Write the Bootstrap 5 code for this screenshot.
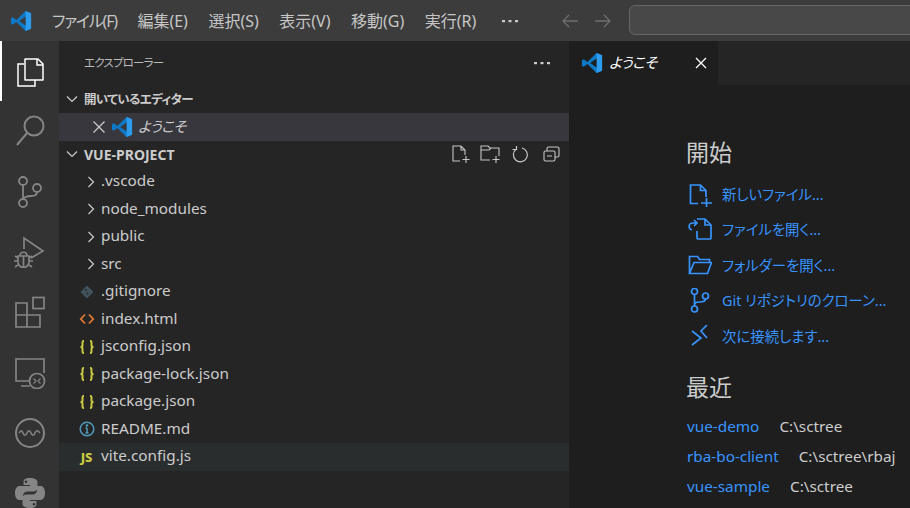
<!DOCTYPE html>
<html lang="ja">
<head>
<meta charset="utf-8">
<title>VS Code</title>
<link href="https://cdn.jsdelivr.net/npm/bootstrap@5.3.0/dist/css/bootstrap.min.css" rel="stylesheet">
<style>
html,body{height:508px;overflow:hidden;background:#1e1e1e;}
body{font-family:"Noto Sans","Noto Sans CJK JP",sans-serif;color:#ccc;font-size:15.3px;font-feature-settings:"palt";}
svg{display:block;flex:none;}
.shell{width:910px;height:508px;overflow:hidden;}
.titlebar{height:41px;background:#3c3c3c;color:#c6c6c6;flex:none;}
.tb-logo{margin:0 20px 0 10px;}
.tb-menu{gap:20.500px;font-size:16px;white-space:nowrap;}
.tb-kana{letter-spacing:-1.200px;}
.tb-dots{margin-left:26px;margin-right:43px;}
.tb-search{width:300px;height:30px;flex:none;margin:0 0 2px 17px;background:#484848;border:1px solid #666;border-radius:6px;}
.tb-nav{gap:15px;}
.activity{width:59px;background:#333;flex:none;position:relative;overflow:hidden;}
.act-item{height:60.300px;flex:none;}
.act-active{position:absolute;left:0;top:0;width:2px;height:60px;background:#fff;}
.side{width:510px;background:#252526;flex:none;}
.side-head{height:44px;padding:0 19px 0 25px;font-size:11.500px;letter-spacing:-.8px;color:#bbb;flex:none;}
.sec{height:27.500px;padding-left:5px;font-size:14px;font-weight:700;color:#ccc;flex:none;}
.sec svg.chev{margin-right:4px;}
.sec-jp{font-size:12.500px;letter-spacing:-.7px;padding-top:3px;}
.row-h{height:27.500px;flex:none;}
.open-row{background:#37373d;padding-left:33px;gap:5px;font-style:italic;height:28px;flex:none;}
.wel-name{font-size:14.500px;letter-spacing:-.7px;}
.file-row{padding-left:42.500px;padding-bottom:2px;color:#ccc;white-space:nowrap;}
.file-row.sel{background:#2a2d2e;}
.ric{width:16px;flex:none;padding-top:2px;}
.ric-dir{margin-left:-19px;margin-right:2.500px;}
.ric-file{margin-left:-23px;margin-right:6.500px;}
.js-mark{font-size:13px;font-weight:800;color:#cbcb41;line-height:16px;display:block;text-align:center;letter-spacing:-.2px;}
.acts{gap:9px;margin-left:auto;padding-right:8.500px;}
.act-last{margin-left:4.500px;}
.main{flex:1;min-width:0;background:#1e1e1e;}
.tabs{height:44px;background:#252526;flex:none;}
.tab{width:149px;background:#1e1e1e;padding:0 11px 0 12px;font-style:italic;gap:6px;color:#fff;}
.welcome{padding:51px 0 0 117px;white-space:nowrap;}
.w-h{font-size:23px;font-weight:400;line-height:32px;color:#ccc;margin:0;}
.w-link{height:35.500px;color:#3794ff;font-size:14.400px;gap:10px;}
.w-list{margin-top:16px;}
.w-start{margin-top:9px;}
.w-recents{margin-top:9px;}
.w-recent{height:30px;gap:20px;padding-left:1px;}
.w-recent a{color:#3794ff;text-decoration:none;}
.w-recent span{color:#ccc;}
</style>
</head>
<body>
<div class="shell d-flex flex-column">
  <div class="titlebar d-flex align-items-center">
    <svg class="tb-logo" width="22" height="22" viewBox="0 0 24 24"><path d="M17 1 7 11 3 8 1 9v6l2 1 4-3 10 10 6-2.500V3.500z" fill="#0e7ac7"/><path d="M17 1l6 2.500v17L17 23z" fill="#2d9cec"/><path d="M17 7l-7 5 7 5z" fill="#3c3c3c"/></svg>
    <div class="tb-menu d-flex align-items-center">
      <span class="tb-kana">ファイル(F)</span><span>編集(E)</span><span>選択(S)</span><span>表示(V)</span><span>移動(G)</span><span>実行(R)</span>
    </div>
    <svg class="tb-dots" width="16" height="4" viewBox="0 0 16 4"><g fill="#ccc"><rect x="0" y="1" width="3" height="2.200"/><rect x="6.500" y="1" width="3" height="2.200"/><rect x="13" y="1" width="3" height="2.200"/></g></svg>
    <div class="tb-nav d-flex">
      <svg width="18" height="16" viewBox="0 0 18 16" fill="none" stroke="#6e6e6e" stroke-width="1.300"><path d="M17 8H2M8 2 2 8l6 6"/></svg>
      <svg width="18" height="16" viewBox="0 0 18 16" fill="none" stroke="#6e6e6e" stroke-width="1.300"><path d="M1 8h15M10 2l6 6-6 6"/></svg>
    </div>
    <div class="tb-search"></div>
  </div>
  <div class="d-flex flex-grow-1" style="min-height:0">
    <div class="activity d-flex flex-column align-items-center">
      <div class="act-active"></div>
      <div class="act-item d-flex align-items-center justify-content-center">
        <svg width="28" height="32" viewBox="0 0 28 32" fill="none" stroke="#fff" stroke-width="1.500"><path d="M9 5v20h18V9l-5-5H9z" stroke-linejoin="round"/><path d="M21 4v6h6"/><path d="M8 9H2v22h17v-6"/></svg>
      </div>
      <div class="act-item d-flex align-items-center justify-content-center">
        <svg width="30" height="32" viewBox="0 0 30 32" fill="none" stroke="#858585" stroke-width="2"><circle cx="19" cy="11" r="9.500"/><path d="M12 18 2 30"/></svg>
      </div>
      <div class="act-item d-flex align-items-center justify-content-center">
        <svg width="26" height="32" viewBox="0 0 26 32" fill="none" stroke="#858585" stroke-width="1.800"><circle cx="6" cy="5" r="4"/><circle cx="6" cy="27" r="4"/><circle cx="20" cy="12" r="4"/><path d="M6 9v14M20 16c0 3-3 4-6 4s-8 1-8 4"/></svg>
      </div>
      <div class="act-item d-flex align-items-center justify-content-center">
        <svg width="32" height="32" viewBox="0 0 32 32" fill="none" stroke="#858585" stroke-width="1.700"><path d="M10 13V2l19 13-12 7"/><path d="M4 20h11v6a5.500 5.500 0 0 1-11 0zM6 20c0-5 7-5 7 0M1 20l3 2M18 20l-3 2M0 25h4M15 25h4M1 31l3-2M18 31l-3-2M9.500 20v11"/></svg>
      </div>
      <div class="act-item d-flex align-items-center justify-content-center">
        <svg width="32" height="32" viewBox="0 0 32 32" fill="none" stroke="#858585" stroke-width="1.700"><rect x="19" y="1.500" width="11" height="11"/><path d="M2 7h11v24H2zM2 19h24v12H13M13 19V7"/></svg>
      </div>
      <div class="act-item d-flex align-items-center justify-content-center">
        <svg width="32" height="32" viewBox="0 0 32 32" fill="none" stroke="#858585" stroke-width="1.700"><path d="M30 16V2H2v22h13M7 29h9"/><circle cx="23" cy="24" r="7.500" fill="#333"/><path d="M19.500 21.500l2.500 2.500-2.500 2.500M26.500 21.500 24 24l2.500 2.500" stroke-width="1.200"/></svg>
      </div>
      <div class="act-item d-flex align-items-center justify-content-center">
        <svg width="32" height="32" viewBox="0 0 32 32" fill="none" stroke="#858585" stroke-width="2"><circle cx="16" cy="16" r="14"/><path d="M5 16c2-3 3-3 4 0s3 3 4 0 3-3 4 0 3 3 4 0 3-3 5 0" stroke-width="1.500"/></svg>
      </div>
      <div class="act-item d-flex align-items-center justify-content-center">
        <svg width="32" height="32" viewBox="0 0 32 32" fill="#858585"><path d="M15.800 1c-6 0-6.200 2.600-6.200 4v3h6.400v1H6C3 9 1 11.500 1 16s2 7 4.500 7H9v-4c0-2.800 2.200-4.500 4.600-4.500h6.200c2.200 0 3.700-1.700 3.700-3.700V5c0-2.200-2.600-4-7.700-4zM12 3.500a1.300 1.300 0 1 1 0 2.600 1.300 1.300 0 0 1 0-2.600z"/><path d="M16.200 31c6 0 6.200-2.600 6.200-4v-3H16v-1h10c3 0 5-2.500 5-7s-2-7-4.500-7H23v4c0 2.800-2.200 4.500-4.600 4.500h-6.200c-2.200 0-3.700 1.700-3.700 3.700V27c0 2.200 2.600 4 7.700 4zM20 28.500a1.300 1.300 0 1 1 0-2.600 1.300 1.300 0 0 1 0 2.600z"/></svg>
      </div>
    </div>

    <div class="side d-flex flex-column">
      <div class="side-head d-flex align-items-center justify-content-between">
        <span>エクスプローラー</span>
        <svg width="16" height="4" viewBox="0 0 16 4"><g fill="#ccc"><rect x="0" y="1" width="3" height="2.200"/><rect x="6.500" y="1" width="3" height="2.200"/><rect x="13" y="1" width="3" height="2.200"/></g></svg>
      </div>
      <div class="sec d-flex align-items-center">
        <svg class="chev" width="16" height="16" viewBox="0 0 16 16" fill="none" stroke="#ccc" stroke-width="1.200"><path d="M3 5.500l5 5 5-5"/></svg>
        <span class="sec-jp">開いているエディター</span>
      </div>
      <div class="open-row d-flex align-items-center">
        <svg width="14" height="14" viewBox="0 0 14 14" fill="none" stroke="#ccc" stroke-width="1.200"><path d="M1.500 1.500l11 11M12.500 1.500l-11 11"/></svg>
        <svg width="22" height="22" viewBox="0 0 24 24"><path d="M17 1 7 11 3 8 1 9v6l2 1 4-3 10 10 6-2.500V3.500z" fill="#0e7ac7"/><path d="M17 1l6 2.500v17L17 23z" fill="#2d9cec"/><path d="M17 7l-7 5 7 5z" fill="#37373d"/></svg>
        <span class="wel-name">ようこそ</span>
      </div>
      <div class="sec d-flex align-items-center">
        <svg class="chev" width="16" height="16" viewBox="0 0 16 16" fill="none" stroke="#ccc" stroke-width="1.200"><path d="M3 5.500l5 5 5-5"/></svg>
        <span>VUE-PROJECT</span>
        <div class="acts d-flex align-items-center">
          <svg width="20" height="20" viewBox="0 0 20 20" fill="none" stroke="#c5c5c5" stroke-width="1.100"><path d="M9 17H2V2h8l4 4v5M10 2v4h4M15 12v7M11.500 15.500h7"/></svg>
          <svg width="22" height="20" viewBox="0 0 22 20" fill="none" stroke="#c5c5c5" stroke-width="1.100"><path d="M10 16H1V2h7l2 2h9v8M1 6h8l2-2M16 12v7M12.500 15.500h7"/></svg>
          <svg width="18" height="18" viewBox="0 0 18 18" fill="none" stroke="#c5c5c5" stroke-width="1.200"><path d="M5.500 4a7 7 0 1 0 5.500-1"/><path d="M5.500 1v3.500H1.500"/></svg>
          <svg class="act-last" width="18" height="18" viewBox="0 0 18 18" fill="none" stroke="#c5c5c5" stroke-width="1.100"><rect x="1" y="6" width="11" height="10" rx="1.500"/><path d="M4 6V3.500A1.500 1.500 0 0 1 5.500 2h9A1.500 1.500 0 0 1 16 3.500v7a1.500 1.500 0 0 1-1.500 1.500H12M4 11h5"/></svg>
        </div>
      </div>

      <div class="file-row row-h d-flex align-items-center"><div class="ric ric-dir"><svg width="16" height="16" viewBox="0 0 16 16" fill="none" stroke="#ccc" stroke-width="1.200"><path d="M5.500 3l5 5-5 5"/></svg></div><span>.vscode</span></div>
      <div class="file-row row-h d-flex align-items-center"><div class="ric ric-dir"><svg width="16" height="16" viewBox="0 0 16 16" fill="none" stroke="#ccc" stroke-width="1.200"><path d="M5.500 3l5 5-5 5"/></svg></div><span>node_modules</span></div>
      <div class="file-row row-h d-flex align-items-center"><div class="ric ric-dir"><svg width="16" height="16" viewBox="0 0 16 16" fill="none" stroke="#ccc" stroke-width="1.200"><path d="M5.500 3l5 5-5 5"/></svg></div><span>public</span></div>
      <div class="file-row row-h d-flex align-items-center"><div class="ric ric-dir"><svg width="16" height="16" viewBox="0 0 16 16" fill="none" stroke="#ccc" stroke-width="1.200"><path d="M5.500 3l5 5-5 5"/></svg></div><span>src</span></div>

      <div class="file-row row-h d-flex align-items-center"><div class="ric ric-file"><svg width="16" height="16" viewBox="0 0 16 16"><path d="M8 1.500l6.500 6.500L8 14.500 1.500 8z" fill="#41535b"/><circle cx="7" cy="6" r="1" fill="#252526"/><circle cx="8.500" cy="9.500" r="1" fill="#252526"/></svg></div><span>.gitignore</span></div>
      <div class="file-row row-h d-flex align-items-center"><div class="ric ric-file"><svg width="16" height="16" viewBox="0 0 16 16" fill="none" stroke="#e37933" stroke-width="1.800"><path d="M6 3.500 1.800 8 6 12.500M10 3.500 14.200 8 10 12.500"/></svg></div><span>index.html</span></div>
      <div class="file-row row-h d-flex align-items-center"><div class="ric ric-file"><svg width="16" height="16" viewBox="0 0 16 16" fill="none" stroke="#cbcb41" stroke-width="2"><path d="M5 2h-.5C3.500 2 3.500 3 3.500 4v2.500C3.500 7.500 2.500 8 1.500 8c1 0 2 .5 2 1.500V12c0 1 0 2 1 2H5M11 2h.5c1 0 1 1 1 2v2.500c0 1 1 1.500 2 1.500-1 0-2 .5-2 1.500V12c0 1 0 2-1 2H11"/></svg></div><span>jsconfig.json</span></div>
      <div class="file-row row-h d-flex align-items-center"><div class="ric ric-file"><svg width="16" height="16" viewBox="0 0 16 16" fill="none" stroke="#cbcb41" stroke-width="2"><path d="M5 2h-.5C3.500 2 3.500 3 3.500 4v2.500C3.500 7.500 2.500 8 1.500 8c1 0 2 .5 2 1.500V12c0 1 0 2 1 2H5M11 2h.5c1 0 1 1 1 2v2.500c0 1 1 1.500 2 1.500-1 0-2 .5-2 1.500V12c0 1 0 2-1 2H11"/></svg></div><span>package-lock.json</span></div>
      <div class="file-row row-h d-flex align-items-center"><div class="ric ric-file"><svg width="16" height="16" viewBox="0 0 16 16" fill="none" stroke="#cbcb41" stroke-width="2"><path d="M5 2h-.5C3.500 2 3.500 3 3.500 4v2.500C3.500 7.500 2.500 8 1.500 8c1 0 2 .5 2 1.500V12c0 1 0 2 1 2H5M11 2h.5c1 0 1 1 1 2v2.500c0 1 1 1.500 2 1.500-1 0-2 .5-2 1.500V12c0 1 0 2-1 2H11"/></svg></div><span>package.json</span></div>
      <div class="file-row row-h d-flex align-items-center"><div class="ric ric-file"><svg width="16" height="16" viewBox="0 0 16 16" fill="none" stroke="#519aba" stroke-width="1.500"><circle cx="8" cy="8" r="6.800"/><path d="M8 7v5M6.500 12h3M6.500 7H8"/><circle cx="8" cy="4.500" r=".6" fill="#519aba"/></svg></div><span>README.md</span></div>
      <div class="file-row sel row-h d-flex align-items-center"><div class="ric ric-file"><span class="js-mark">JS</span></div><span>vite.config.js</span></div>
    </div>

    <div class="main d-flex flex-column">
      <div class="tabs d-flex">
        <div class="tab d-flex align-items-center">
          <svg width="22" height="22" viewBox="0 0 24 24"><path d="M17 1 7 11 3 8 1 9v6l2 1 4-3 10 10 6-2.500V3.500z" fill="#0e7ac7"/><path d="M17 1l6 2.500v17L17 23z" fill="#2d9cec"/><path d="M17 7l-7 5 7 5z" fill="#1e1e1e"/></svg>
          <span class="wel-name">ようこそ</span>
          <svg class="ms-auto" width="12" height="12" viewBox="0 0 12 12" fill="none" stroke="#fff" stroke-width="1.300"><path d="M1 1l10 10M11 1 1 11"/></svg>
        </div>
      </div>
      <div class="welcome">
        <h2 class="w-h">開始</h2>
        <div class="w-start">
          <div class="w-link d-flex align-items-center">
            <svg width="26" height="24" viewBox="0 0 26 24" fill="none" stroke="#3794ff" stroke-width="1.700"><path d="M12 20.500H4.500V2h10l5.500 5.500V14M14.500 2v5.500H20M20.500 15v9M15 20h11"/></svg><span>新しいファイル...</span>
          </div>
          <div class="w-link d-flex align-items-center">
            <svg width="26" height="24" viewBox="0 0 26 24" fill="none" stroke="#3794ff" stroke-width="1.700"><path d="M11 1h8l6 6v13a1 1 0 0 1-1 1H12a1 1 0 0 1-1-1v-7M19 1v6h6M10 5H7c-5 0-5 6-1 7M8 2l3 3-3 3"/></svg><span>ファイルを開く...</span>
          </div>
          <div class="w-link d-flex align-items-center">
            <svg width="26" height="24" viewBox="0 0 26 24" fill="none" stroke="#3794ff" stroke-width="1.700"><path d="M3.500 19.500V2.500h8l2 3h10v3.500M3.500 19.500h18l4-11H8z"/></svg><span>フォルダーを開く...</span>
          </div>
          <div class="w-link d-flex align-items-center">
            <svg width="26" height="26" viewBox="0 0 26 26" fill="none" stroke="#3794ff" stroke-width="1.700"><circle cx="8.500" cy="3.500" r="3"/><circle cx="8.500" cy="21" r="3"/><circle cx="19.500" cy="8" r="3"/><path d="M8.500 6.500V18M19.500 11c0 3-3 3-6 3s-5 0-5 4"/></svg><span>Git リポジトリのクローン...</span>
          </div>
          <div class="w-link d-flex align-items-center">
            <svg width="26" height="24" viewBox="0 0 26 24" fill="none" stroke="#3794ff" stroke-width="1.700"><path d="M6 6l9 7-9 7M21 0l-6 6 6 7"/></svg><span>次に接続します...</span>
          </div>
        </div>
        <h2 class="w-h w-list">最近</h2>
        <div class="w-recents">
          <div class="w-recent d-flex align-items-center"><a href="#">vue-demo</a><span>C:\sctree</span></div>
          <div class="w-recent d-flex align-items-center"><a href="#">rba-bo-client</a><span>C:\sctree\rbaj</span></div>
          <div class="w-recent d-flex align-items-center"><a href="#">vue-sample</a><span>C:\sctree</span></div>
        </div>
      </div>
    </div>
  </div>
</div>
</body>
</html>
